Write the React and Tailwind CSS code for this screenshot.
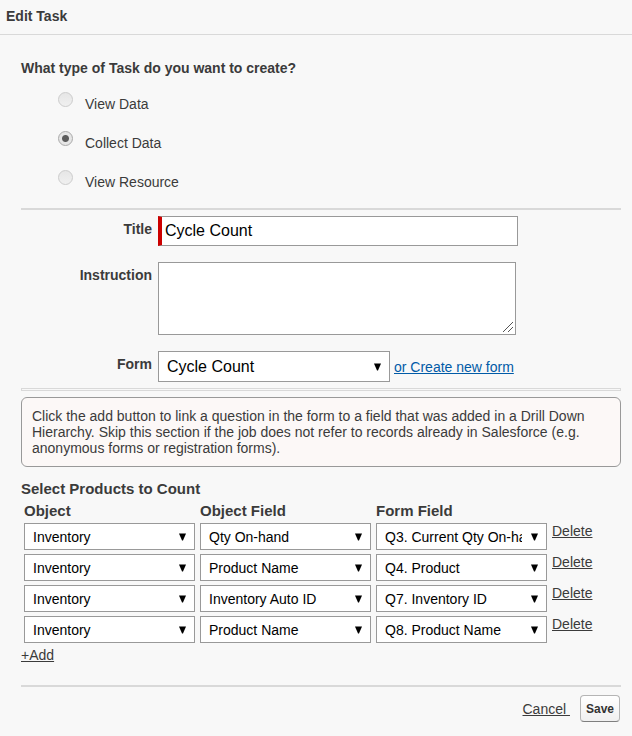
import { useState } from "react";
import clsx from "clsx";

const TASK_TYPES = ["View Data", "Collect Data", "View Resource"];

const OBJECTS = ["Inventory"];
const OBJECT_FIELDS = ["Qty On-hand", "Product Name", "Inventory Auto ID"];
const FORM_FIELDS = [
  "Q3. Current Qty On-hand",
  "Q4. Product",
  "Q7. Inventory ID",
  "Q8. Product Name",
];

const INITIAL_ROWS = [
  { id: 1, object: "Inventory", objectField: "Qty On-hand", formField: "Q3. Current Qty On-hand" },
  { id: 2, object: "Inventory", objectField: "Product Name", formField: "Q4. Product" },
  { id: 3, object: "Inventory", objectField: "Inventory Auto ID", formField: "Q7. Inventory ID" },
  { id: 4, object: "Inventory", objectField: "Product Name", formField: "Q8. Product Name" },
];

const Select = ({ options, className, large, ...props }) => (
  <div className={clsx("relative", className)}>
    <select
      className={clsx(
        "block w-full appearance-none border border-[#999] bg-white pl-2 pr-6 text-black",
        large ? "h-[31px] text-base" : "h-[27px] text-sm"
      )}
      {...props}
    >
      {options.map((option) => (
        <option key={option}>{option}</option>
      ))}
    </select>
    <svg
      viewBox="0 0 8 8"
      className="pointer-events-none absolute inset-y-0 right-2 my-auto h-2 w-2"
      aria-hidden="true"
    >
      <path d="M0 0.5h7L4 7.5h-1z" />
    </svg>
  </div>
);

const FieldRow = ({ label, htmlFor, children }) => (
  <div className="flex items-start">
    <label htmlFor={htmlFor} className="w-[131px] shrink-0 pt-[3px] text-right font-bold leading-5">
      {label}
    </label>
    <div className="ml-1.5 flex min-w-0 flex-1 items-center">{children}</div>
  </div>
);

const App = () => {
  const [type, setType] = useState("Collect Data");
  const [rows, setRows] = useState(INITIAL_ROWS);

  const updateRow = (id, key, value) =>
    setRows(rows.map((row) => (row.id === id ? { ...row, [key]: value } : row)));

  const addRow = () =>
    setRows([
      ...rows,
      { id: Date.now(), object: OBJECTS[0], objectField: OBJECT_FIELDS[0], formField: FORM_FIELDS[0] },
    ]);

  return (
    <div className="min-h-screen bg-[#f8f8f8] font-['Liberation_Sans',Arial,sans-serif] text-sm text-[#3b3b3b]">
      <header className="border-b border-[#d9d9d9] px-1.5 pb-2 pt-1.5">
        <h1 className="font-bold leading-5">Edit Task</h1>
      </header>

      <form className="pl-[21px] pr-[11px] pt-[23px]" onSubmit={(e) => e.preventDefault()}>
        <fieldset>
          <legend className="font-bold leading-5">What type of Task do you want to create?</legend>
          <div className="flex flex-col gap-[19px] pb-[18px] pl-[37px] pt-3.5">
            {TASK_TYPES.map((item) => (
              <label key={item} className="flex h-5 items-start gap-3 leading-6">
                <input
                  type="radio"
                  name="type"
                  value={item}
                  checked={type === item}
                  onChange={() => setType(item)}
                  className="h-[15px] w-[15px] appearance-none rounded-full border border-[#ccc] bg-linear-to-b from-[#e6e6e6] to-[#f0f0f0] checked:border-[#aaa] checked:bg-[radial-gradient(circle,#5c5c5c_3px,#e6e6e6_4px)]"
                />
                {item}
              </label>
            ))}
          </div>
        </fieldset>

        <div className="flex flex-col gap-4 border-t-2 border-[#d9d9d9] pb-1.5 pt-1.5">
          <FieldRow label="Title" htmlFor="title">
            <input
              id="title"
              type="text"
              defaultValue="Cycle Count"
              className="h-[30px] w-[360px] border border-l-4 border-[#999] border-l-[#c00] bg-white px-[3px] text-base text-black"
            />
          </FieldRow>
          <FieldRow label="Instruction" htmlFor="instruction">
            <div className="relative">
              <textarea
                id="instruction"
                className="block h-[73px] w-[358px] resize border border-[#999] bg-white p-1 text-base text-black"
              />
              <svg
                viewBox="0 0 14 14"
                className="pointer-events-none absolute bottom-px right-px h-3.5 w-3.5 bg-white"
                aria-hidden="true"
              >
                <path d="M2 12L12 2M7 12l5-5" stroke="#555" fill="none" />
              </svg>
            </div>
          </FieldRow>
          <FieldRow label="Form" htmlFor="form">
            <Select id="form" large options={["Cycle Count"]} className="w-[232px]" />
            <a href="#new-form" className="ml-1 text-[#015ba7] underline">
              or Create new form
            </a>
          </FieldRow>
        </div>

        <div className="h-[3px] border border-[#d9d9d9]" />

        <p className="mt-1.5 rounded-md border border-[#999] bg-[#fcf8f7] px-2.5 py-2.5 leading-4">
          Click the add button to link a question in the form to a field that was added in a Drill Down
          Hierarchy. Skip this section if the job does not refer to records already in Salesforce (e.g.
          anonymous forms or registration forms).
        </p>

        <h2 className="mt-3 text-[15px] font-bold leading-5">Select Products to Count</h2>
        <table className="ml-[3px] mt-0.5">
          <thead>
            <tr className="text-left text-[15px] leading-5">
              <th className="pb-0.5">Object</th>
              <th className="pb-0.5">Object Field</th>
              <th className="pb-0.5">Form Field</th>
              <td />
            </tr>
          </thead>
          <tbody>
            {rows.map((row) => (
              <tr key={row.id} className="align-top">
                <td className="pb-1 pr-[5px]">
                  <Select
                    aria-label="Object"
                    className="w-[171px]"
                    options={OBJECTS}
                    value={row.object}
                    onChange={(e) => updateRow(row.id, "object", e.target.value)}
                  />
                </td>
                <td className="pb-1 pr-[5px]">
                  <Select
                    aria-label="Object Field"
                    className="w-[171px]"
                    options={OBJECT_FIELDS}
                    value={row.objectField}
                    onChange={(e) => updateRow(row.id, "objectField", e.target.value)}
                  />
                </td>
                <td className="pb-1 pr-[5px]">
                  <Select
                    aria-label="Form Field"
                    className="w-[171px]"
                    options={FORM_FIELDS}
                    value={row.formField}
                    onChange={(e) => updateRow(row.id, "formField", e.target.value)}
                  />
                </td>
                <td>
                  <button
                    type="button"
                    className="block leading-4 underline"
                    onClick={() => setRows(rows.filter((r) => r.id !== row.id))}
                  >
                    Delete
                  </button>
                </td>
              </tr>
            ))}
          </tbody>
        </table>
        <button type="button" className="block leading-4 underline" onClick={addRow}>
          +Add
        </button>

        <footer className="mt-[22px] flex items-center justify-end gap-2.5 border-t-2 border-[#d9d9d9] pb-3 pt-2">
          <button type="button" className="whitespace-pre underline">
            {"Cancel "}
          </button>
          <button
            type="submit"
            className="mr-px h-[27px] rounded border border-[#b5b5b5] border-b-[#7f7f7f] bg-linear-to-b from-white to-[#f0f0f0] px-[5px] text-xs font-bold text-[#333]"
          >
            Save
          </button>
        </footer>
      </form>
    </div>
  );
};

export default App;
